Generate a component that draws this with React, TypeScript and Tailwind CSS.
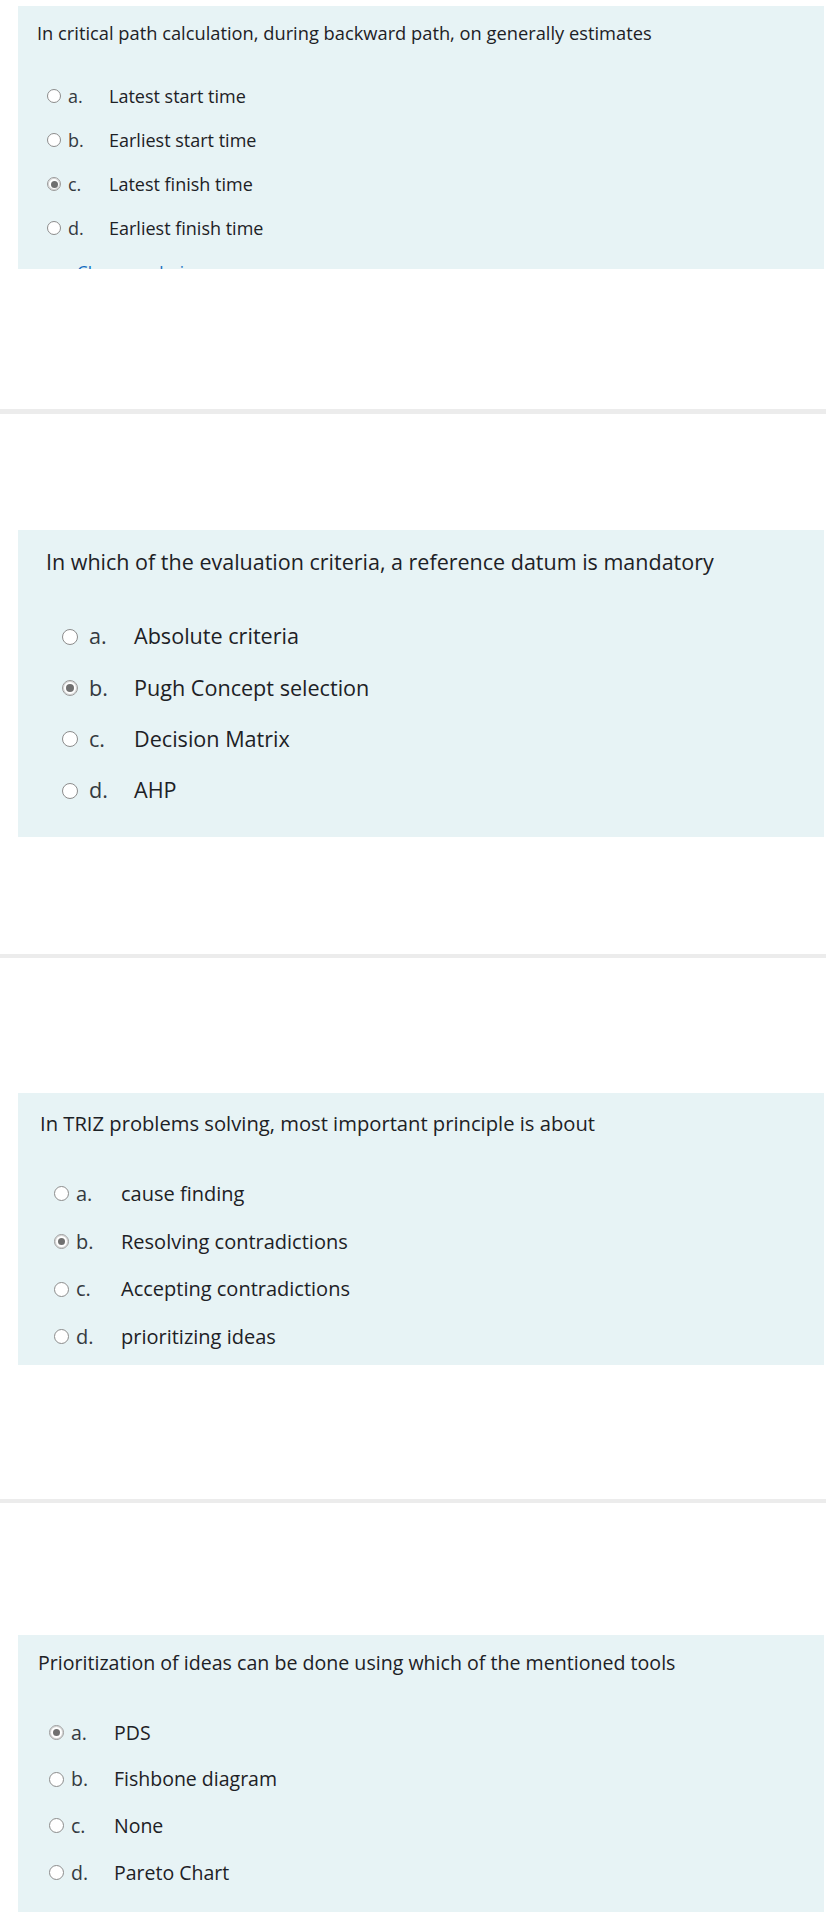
import React from "react";

type Spec = {
  mt: string;
  h: string;
  title: string;
  titleCls: string;
  listCls: string;
  rowCls: string;
  radioCls: string;
  dotCls: string;
  letterCls: string;
  options: string[];
  checked: number;
  clear?: boolean;
};

const letters = ["a.", "b.", "c.", "d."];

const questions: Spec[] = [
  {
    mt: "mt-[6px]",
    h: "h-[263px]",
    title: "In critical path calculation, during backward path, on generally estimates",
    titleCls: "pt-[15px] pl-[19px] text-[18.3px] leading-[24px]",
    listCls: "mt-[29px] pl-[29px]",
    rowCls: "h-[44px] text-[18px]",
    radioCls: "h-[14px] w-[14px]",
    dotCls: "h-[7px] w-[7px]",
    letterCls: "ml-[7px] w-[41px]",
    options: ["Latest start time", "Earliest start time", "Latest finish time", "Earliest finish time"],
    checked: 2,
    clear: true,
  },
  {
    mt: "mt-[116px]",
    h: "h-[307px]",
    title: "In which of the evaluation criteria, a reference datum is mandatory",
    titleCls: "pt-[18px] pl-[28px] text-[21.5px] leading-[28px]",
    listCls: "mt-[35px] pl-[44px]",
    rowCls: "h-[51.3px] text-[21.6px]",
    radioCls: "h-[16px] w-[16px]",
    dotCls: "h-[8px] w-[8px]",
    letterCls: "ml-[11px] w-[45px]",
    options: ["Absolute criteria", "Pugh Concept selection", "Decision Matrix", "AHP"],
    checked: 1,
  },
  {
    mt: "mt-[135px]",
    h: "h-[272px]",
    title: "In TRIZ problems solving, most important principle is about",
    titleCls: "pt-[17px] pl-[22px] text-[20.2px] leading-[26px]",
    listCls: "mt-[34px] pl-[36px]",
    rowCls: "h-[47.7px] text-[20px]",
    radioCls: "h-[15px] w-[15px]",
    dotCls: "h-[7px] w-[7px]",
    letterCls: "ml-[7px] w-[45px]",
    options: ["cause finding", "Resolving contradictions", "Accepting contradictions", "prioritizing ideas"],
    checked: 1,
  },
  {
    mt: "mt-[132px]",
    h: "h-[277px]",
    title: "Prioritization of ideas can be done using which of the mentioned tools",
    titleCls: "pt-[15px] pl-[20px] text-[19.6px] leading-[26px]",
    listCls: "mt-[33px] pl-[31px]",
    rowCls: "h-[46.7px] text-[19.5px]",
    radioCls: "h-[15px] w-[15px]",
    dotCls: "h-[7px] w-[7px]",
    letterCls: "ml-[7px] w-[43px]",
    options: ["PDS", "Fishbone diagram", "None", "Pareto Chart"],
    checked: 0,
  },
];

function Radio({ on, cls, dot }: { on: boolean; cls: string; dot: string }) {
  return (
    <span
      className={`${cls} flex shrink-0 items-center justify-center rounded-full border bg-white ${
        on ? "border-[#9a9a9a] shadow-[inset_0_0_0_1px_#d4d4d4]" : "border-[#8c8c8c]"
      }`}
    >
      {on ? <span className={`${dot} rounded-full bg-[#707070]`} /> : null}
    </span>
  );
}

function Question({ q }: { q: Spec }) {
  return (
    <div className={`${q.mt} ${q.h} ml-[18px] mr-[2px] overflow-hidden bg-[#e7f3f5] text-[#1d2125]`}>
      <div className={q.titleCls}>{q.title}</div>
      <div className={q.listCls}>
        {q.options.map((opt, i) => (
          <div key={opt} className={`${q.rowCls} flex items-center`}>
            <Radio on={i === q.checked} cls={q.radioCls} dot={q.dotCls} />
            <span className={`${q.letterCls} shrink-0 text-[#343a40]`}>{letters[i]}</span>
            <span>{opt}</span>
          </div>
        ))}
      </div>
      {q.clear ? (
        <div className="mt-[10px] pl-[59px] text-[17px] leading-[24px] text-[#0f6cbf]">Clear my choice</div>
      ) : null}
    </div>
  );
}

function Rule({ mt, h }: { mt: string; h: string }) {
  return <div className={`${mt} ${h} w-full bg-[#ececec]`} />;
}

export default function App() {
  return (
    <div className="min-h-[1920px] w-[826px] bg-white pb-[8px] font-['Open_Sans','Liberation_Sans',sans-serif]">
      <Question q={questions[0]} />
      <Rule mt="mt-[140px]" h="h-[5px]" />
      <Question q={questions[1]} />
      <Rule mt="mt-[117px]" h="h-[4px]" />
      <Question q={questions[2]} />
      <Rule mt="mt-[134px]" h="h-[4px]" />
      <Question q={questions[3]} />
    </div>
  );
}
